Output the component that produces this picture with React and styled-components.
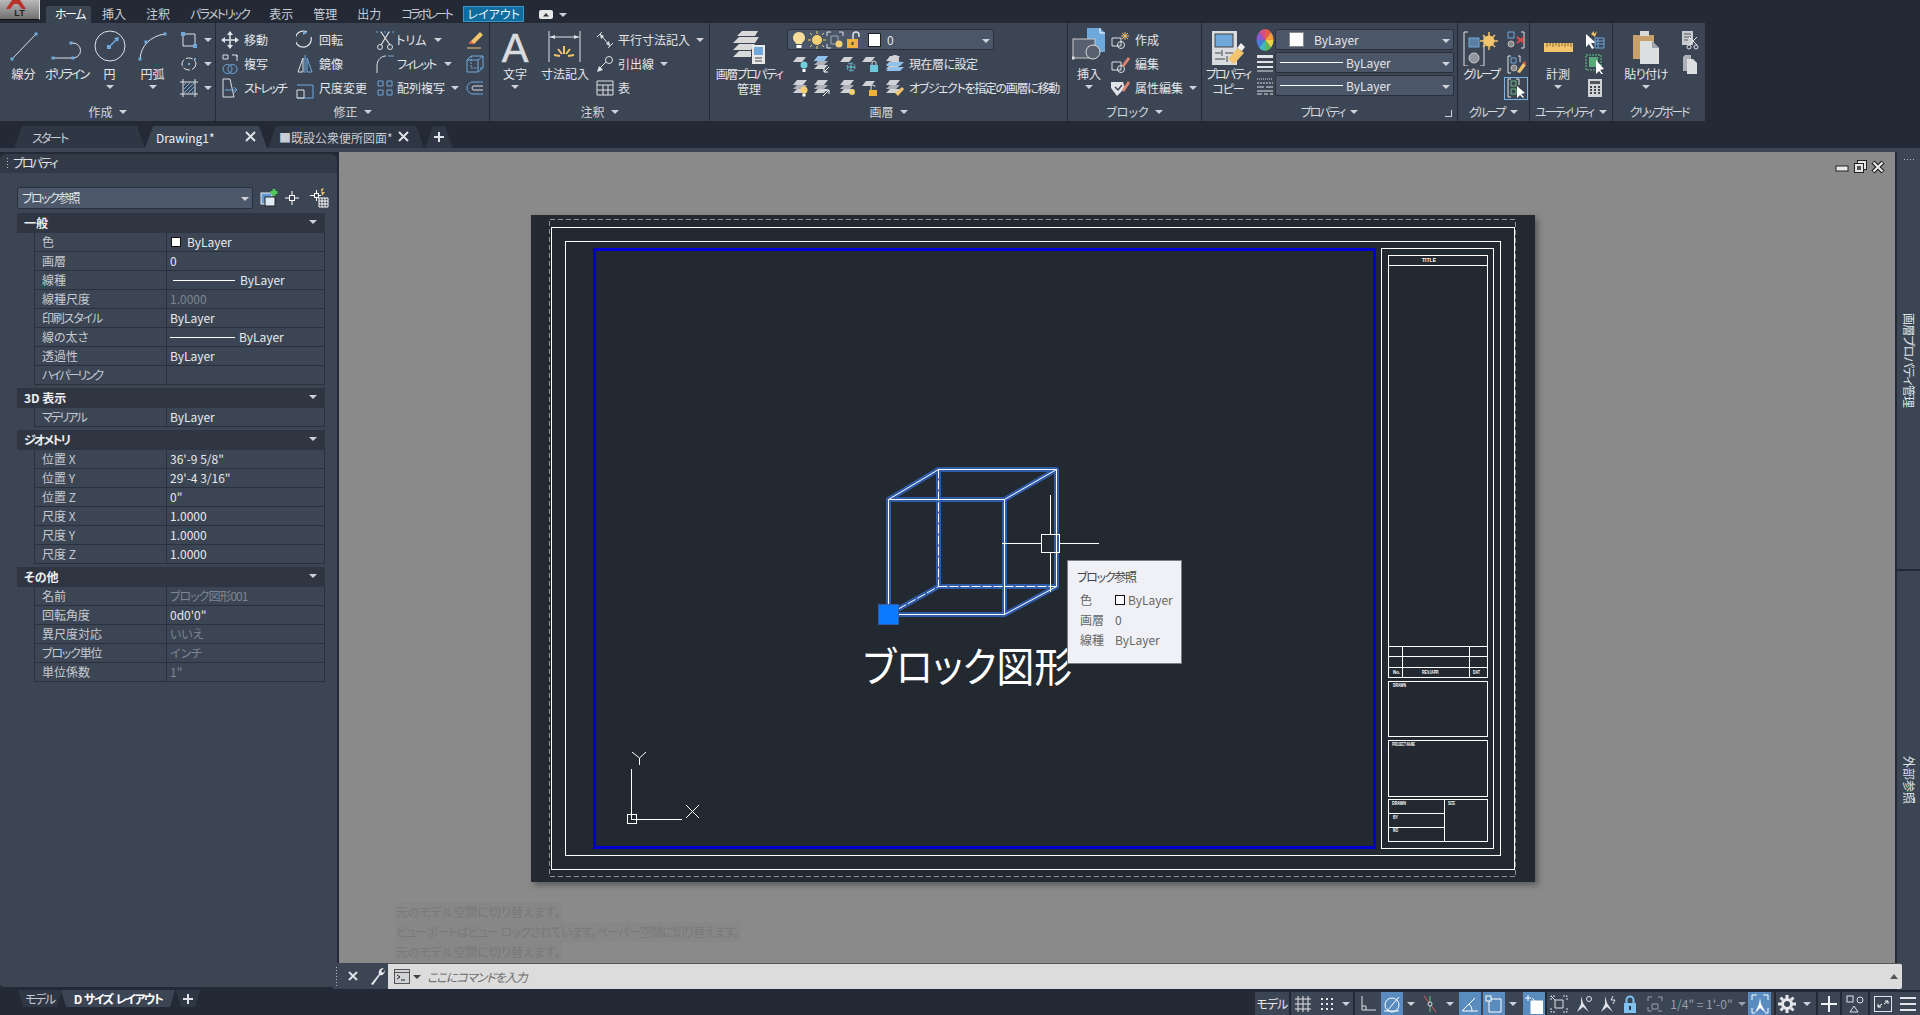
import React from 'react';
import styled, { createGlobalStyle, css } from 'styled-components';

const L = '#dfe2e6', B = '#6fa9dc', W = '#ffffff', Y = '#f2c46d', DK = '#2a303b';
const BG = '#232a35', PANEL = '#3c4554', HEAD = '#2f3642';

const Global = createGlobalStyle`
  html, body { margin: 0; padding: 0; width: 1920px; height: 1015px; overflow: hidden; background: ${BG}; }
  * { box-sizing: border-box; }
  body { font-family: "Noto Sans CJK JP", "Noto Sans", sans-serif; font-size: 12px; color: #e4e6ea; font-feature-settings: "palt"; }
`;

const Page = styled.div`width:1920px;height:1015px;display:flex;flex-direction:column;overflow:hidden;background:${BG};`;
const Narrow = styled.span`letter-spacing:${p => p.$ls ?? -1.8}px;`;
const TopBar = styled.div`height:23px;display:flex;align-items:flex-end;`;
const Logo = styled.div`
  position:relative;align-self:flex-start;width:40px;height:20px;margin-right:6px;
  background:linear-gradient(#b9b9b9,#707070);border-right:1px solid #d9d9d9;border-bottom:1px solid #111;
  color:#222;font:700 9px "Liberation Sans",sans-serif;text-align:center;padding-top:9px;line-height:9px;
  svg{position:absolute;left:5px;top:0;}
`;
const MenuTab = styled.div`
  height:17px;padding:0 10px;line-height:16px;color:#c9ced6;white-space:nowrap;margin-left:${p => p.$ml || 0}px;
  ${p => p.$active && css`background:${PANEL};color:#fff;border-radius:2px 2px 0 0;padding:0 9px;width:45px;`}
  ${p => p.$context && css`background:#0f6c9e;border:1px solid #3b97c9;margin:0 0 1px 2px;height:16px;line-height:14px;padding:0;width:61px;text-align:center;color:#e6f3fb;`}
`;
const TabIcon = styled.div`display:flex;align-items:center;gap:4px;height:17px;margin-left:14px;`;
const Caret = styled.i`
  display:inline-block;flex:none;width:0;height:0;border-left:4px solid transparent;border-right:4px solid transparent;
  border-top:4px solid ${p => p.$c || '#cfd3d9'};margin-left:${p => p.$ml || 0}px;
`;
const Ribbon = styled.div`height:98px;display:flex;`;
const RPanel = styled.section`width:${p => p.$w}px;margin-right:1px;background:${PANEL};display:flex;flex-direction:column;position:relative;`;
const RBody = styled.div`height:80px;display:flex;padding-left:${p => p.$pl || 0}px;`;
const RTitle = styled.div`height:17px;display:flex;align-items:center;justify-content:center;gap:6px;color:#d5d8dd;line-height:14px;white-space:nowrap;`;
const Launcher = styled.span`position:absolute;right:5px;bottom:4px;width:7px;height:7px;border-right:1px solid #cfd3d9;border-bottom:1px solid #cfd3d9;`;
const Big = styled.div`width:${p => p.$w}px;flex:none;display:flex;flex-direction:column;align-items:center;`;
const BigIcon = styled.div`height:43px;display:flex;align-items:flex-start;justify-content:center;padding-top:${p => p.$pt ?? 8}px;`;
const BigLabel = styled.div`line-height:15px;text-align:center;white-space:nowrap;color:#e4e6ea;`;
const BigCaret = styled.div`line-height:0;margin-top:3px;`;
const Col = styled.div`width:${p => p.$w}px;flex:none;padding-top:5px;margin-left:${p => p.$ml || 0}px;`;
const Tool = styled.div`height:24px;display:flex;align-items:center;white-space:nowrap;`;
const Cell = styled.span`width:${p => p.$w || 18}px;flex:none;display:flex;justify-content:center;align-items:center;margin-left:${p => p.$ml || 0}px;margin-right:${p => p.$mr || 0}px;`;
const ToolText = styled.span`color:#e4e6ea;line-height:14px;`;
const SelectedCell = styled(Cell)`height:23px;border:1px solid #78b4e6;`;
const LayerArea = styled.div`width:280px;margin-left:-1px;padding-top:6px;`;
const Combo = styled.div`
  height:${p => p.$h || 21}px;width:${p => p.$w ? `${p.$w}px` : 'auto'};display:flex;align-items:center;background:#4b5669;border:1px solid ${DK};
  border-radius:2px;position:relative;color:#e4e6ea;margin-bottom:${p => p.$mb || 0}px;
`;
const ComboArrow = styled.span`position:absolute;right:3px;top:50%;margin-top:-2px;line-height:0;`;
const ComboText = styled.span`margin-left:${p => p.$ml}px;`;
const Swatch = styled.span`width:${p => p.$s || 13}px;height:${p => p.$h || 14}px;background:#fff;flex:none;margin-left:${p => p.$ml || 0}px;border:1px solid ${p => p.$b || '#222'};`;
const LineStroke = styled.span`width:${p => p.$w}px;height:1px;background:#fff;flex:none;margin-left:${p => p.$ml || 0}px;margin-right:${p => p.$mr || 0}px;`;
const ComboStack = styled.div`width:179px;padding-top:6px;display:flex;flex-direction:column;gap:2px;`;
const ComboIcons = styled.div`width:21px;padding-top:6px;display:flex;flex-direction:column;gap:2px;flex:none;`;
const ComboIconCell = styled.div`height:21px;display:flex;align-items:center;justify-content:center;`;

const DocTabs = styled.div`height:22px;margin-top:5px;display:flex;padding-left:14px;`;
const DocTab = styled.div`
  width:${p => p.$w}px;margin-right:${p => p.$mr ?? 1}px;height:22px;padding-left:${p => p.$pl || 18}px;display:flex;align-items:center;position:relative;
  background:${p => p.$active ? PANEL : '#2f3744'};border-radius:8px 8px 0 0;color:${p => p.$active ? '#eef0f3' : '#c9ced6'};
  clip-path:polygon(8px 0,calc(100% - 8px) 0,100% 100%,0 100%);
`;
const DocClose = styled.span`position:absolute;right:${p => p.$r}px;top:5px;line-height:0;`;
const DocStrip = styled.div`height:4px;background:${PANEL};`;

const Main = styled.div`height:838px;display:flex;`;
const Palette = styled.aside`width:337px;margin-right:2px;display:flex;flex-direction:column;height:835px;padding-top:2px;flex:none;`;
const PaletteTitle = styled.div`height:19px;background:#333a47;border-radius:6px 6px 0 0;display:flex;align-items:center;gap:4px;padding:0 0 2px 6px;color:#e4e6ea;`;
const Grip = styled.span`width:3px;height:${p => p.$h || 11}px;flex:none;background-image:radial-gradient(circle,#b8bcc3 .7px,transparent .8px);background-size:3px 3px;`;
const PaletteBody = styled.div`flex:1;background:${PANEL};border-radius:0 0 4px 4px;padding:14px 0 0 17px;`;
const SelectorRow = styled.div`display:flex;height:22px;align-items:center;margin-bottom:4px;`;
const SelectorCombo = styled(Combo)`width:236px;height:22px;padding:0 0 2px 4px;background:#4d586b;`;
const SelectorTool = styled(Cell)`margin-left:${p => p.$ml}px;`;
const Section = styled.div`width:308px;margin-bottom:3px;`;
const SectionHead = styled.div`height:20px;background:${HEAD};display:flex;align-items:center;justify-content:space-between;padding:0 8px 2px 7px;font-weight:700;color:#eef0f3;`;
const Rows = styled.div`margin-left:17px;border-left:1px solid #2b313c;`;
const Row = styled.div`display:grid;grid-template-columns:132px 1fr;height:19px;border-bottom:1px solid #2b313c;border-right:1px solid #2b313c;line-height:18px;`;
const RowLabel = styled.div`padding-left:7px;color:#c5cad1;border-right:1px solid #2b313c;white-space:nowrap;`;
const RowValue = styled.div`padding-left:3px;display:flex;align-items:center;white-space:nowrap;color:${p => p.$dim ? '#7d8592' : '#e8eaed'};`;

const ViewCol = styled.div`flex:1;display:flex;flex-direction:column;min-width:0;width:1556px;`;
const Viewport = styled.div`height:811px;background:#8a8a8a;position:relative;overflow:hidden;padding:63px 0 0 192px;`;
const Sheet = styled.div`width:1004px;height:667px;background:#232930;box-shadow:3px 3px 6px rgba(0,0,0,.35);`;
const SheetSvg = styled.svg`display:block;`;
const WinButtons = styled.div`position:absolute;right:10px;top:8px;display:flex;gap:4px;`;
const Tip = styled.div`
  position:absolute;left:728px;top:408px;width:115px;height:104px;background:#f0f1f6;border:1px solid #7e7e7e;padding:7px 0 0 9px;color:#555;
`;
const TipTitle = styled.div`line-height:18px;margin-bottom:4px;color:#444;`;
const TipRow = styled.div`display:grid;grid-template-columns:35px 1fr;padding-left:3px;height:20px;line-height:20px;color:#666;`;
const TipValue = styled.div`display:flex;align-items:center;gap:3px;`;
const TipSwatch = styled.span`width:10px;height:10px;background:#fff;border:1px solid #111;`;
const History = styled.div`position:absolute;left:56px;bottom:1px;display:flex;flex-direction:column;align-items:flex-start;`;
const HistoryLine = styled.div`height:20px;line-height:19px;color:#797979;background:rgba(120,120,120,.18);padding:0 1px;white-space:nowrap;`;
const CommandBar = styled.div`
  height:26px;margin:0 -7px 1px -6px;display:flex;position:relative;z-index:2;width:1569px;flex:none;
`;
const CommandTools = styled.div`width:55px;background:${PANEL};display:flex;align-items:center;gap:0;padding-left:2px;flex:none;`;
const CommandInput = styled.div`flex:1;background:#dcdcdc;display:flex;align-items:center;padding-left:6px;gap:3px;border-top:1px solid #555;position:relative;border-radius:0 2px 2px 0;`;
const Placeholder = styled.span`font-style:italic;color:#6d6d6d;margin-left:3px;`;
const HistoryToggle = styled.span`position:absolute;right:4px;top:10px;width:0;height:0;border-left:4px solid transparent;border-right:4px solid transparent;border-bottom:5px solid #555;`;
const Dock = styled.div`width:23px;margin-left:2px;display:flex;flex-direction:column;gap:2px;flex:none;`;
const DockPane = styled.div`flex:${p => p.$f};background:${PANEL};display:flex;align-items:center;justify-content:center;position:relative;`;
const DockText = styled.span`writing-mode:vertical-rl;text-orientation:sideways;color:#dfe2e6;line-height:14px;`;
const DockGrip = styled(Grip)`position:absolute;top:6px;left:6px;width:11px;height:3px;`;

const Footer = styled.footer`height:25px;display:flex;justify-content:space-between;align-items:flex-start;`;
const LayoutTabs = styled.div`display:flex;padding-left:18px;height:17px;`;
const LayoutTab = styled.div`
  width:${p => p.$w}px;height:17px;display:flex;align-items:center;justify-content:center;margin-right:${p => p.$mr ?? 0}px;line-height:14px;word-spacing:2px;
  background:${p => p.$active ? PANEL : '#2f3744'};color:${p => p.$active ? '#fff' : '#c5cad1'};font-weight:${p => p.$active ? 700 : 400};
  clip-path:polygon(0 0,100% 0,calc(100% - 5px) 100%,5px 100%);
`;
const StatusBar = styled.div`display:flex;height:23px;margin-top:2px;gap:2px;padding-right:0;`;
const StatusGroup = styled.div`display:flex;background:${PANEL};height:23px;align-items:center;`;
const StatusCell = styled.div`
  width:${p => p.$w}px;height:23px;display:flex;align-items:center;justify-content:center;flex:none;margin-left:${p => p.$ml || 0}px;
  ${p => p.$on && css`background:#5b8cc0;`}
  color:${p => p.$dim ? '#99a0ab' : '#e4e6ea'};white-space:nowrap;
`;

const Svg = styled.svg`display:block;flex:none;`;
const BigLetter = styled.span`font:400 40px/32px "Liberation Sans",sans-serif;-webkit-text-stroke:.6px #d9dbde;color:#d9dbde;display:block;height:32px;`;

const Ic = ({ w = 18, h = 18, sw = 1, s = L, children }) => (
  <Svg width={w} height={h} viewBox={`0 0 ${w} ${h}`} fill="none" stroke={s} strokeWidth={sw}>{children}</Svg>
);
const Gr = ({ x, y, s = 3, c = B }) => <rect x={x - s / 2} y={y - s / 2} width={s} height={s} fill={c} stroke="none" />;

/* draw */
const ILine = () => <Ic w={30} h={30}><path d="M3 28 27 3" /><Gr x={27} y={3} /><Gr x={3} y={28} /></Ic>;
const IPoly = () => <Ic w={36} h={26}><path d="M4 22H24A7.5 7.5 0 0 0 24 7H22" /><Gr x={4} y={22} /><Gr x={24} y={22} /><Gr x={22} y={7} /></Ic>;
const ICircle = () => <Ic w={32} h={32}><circle cx="16" cy="16" r="15" /><path d="M16 16 23 9" stroke={B} strokeWidth="1.5" /><path d="M25 7l-5 1 4 4z" fill={B} stroke="none" /><Gr x={15} y={17} s={4} /></Ic>;
const IArc = () => <Ic w={30} h={30}><path d="M2 28C3 14 13 5 27 3" /><Gr x={27} y={3} /><Gr x={8} y={11} /><Gr x={2} y={28} /></Ic>;
const IRect = () => <Ic><path d="M3 3H15V15H3Z" /><Gr x={3} y={3} s={4} /><Gr x={15} y={15} s={4} /></Ic>;
const IEllipse = () => <Ic><ellipse cx="9" cy="9" rx="7" ry="6" strokeDasharray="7 2" /><Gr x={9} y={9} s={2} /><Gr x={15} y={4} s={2} /></Ic>;
const IHatch = () => <Ic><path d="M3 0V18M15 0V18M0 3H18M0 15H18" /><path d="M4 14 14 4M4 10 10 4M8 14 14 8M4 6 6 4M12 14 14 12" stroke={B} /></Ic>;
/* modify */
const IMove = () => <Ic><path d="M9 1V17M1 9H17" strokeWidth="1.5" s={W} /><path d="M9 0l3 4H6zM9 18l3-4H6zM0 9l4-3v6zM18 9l-4-3v6z" fill={L} stroke="none" /></Ic>;
const ICopy = () => <Ic w={18} h={22}><circle cx="6.500" cy="16" r="4.500" stroke={B} /><circle cx="11.500" cy="16" r="4.500" stroke={B} /><path d="M2 2H7V6H2Z" /><path d="M11 2H16V4M16 2V8" /></Ic>;
const IStretch = () => <Ic w={18} h={22}><path d="M2 20V2H9L13 20Z" /><path d="M4 13H16M13 10l3 3-3 3" stroke={B} /></Ic>;
const IRotate = () => <Ic w={18} h={22}><path d="M11 3A8 8 0 1 0 15 8" strokeWidth="1.2" /><path d="M7 1v5l4-2z" fill={B} stroke="none" /></Ic>;
const IMirror = () => <Ic w={18} h={22}><path d="M9 2V20" stroke={B} /><path d="M7 5V19H2Z" /><path d="M11 5V19H16Z" stroke={B} /></Ic>;
const IScale = () => <Ic w={18} h={22}><path d="M1 8H17V21H1" stroke={B} /><path d="M1 13H8V21H1Z" /></Ic>;
const ITrim = () => <Ic w={20} h={22}><path d="M1 3H19" stroke={B} strokeDasharray="2 2" /><path d="M6 3 15 16M14 3 6 16" strokeWidth="1.2" /><circle cx="5" cy="18" r="2.500" /><circle cx="15" cy="18" r="2.500" /></Ic>;
const IFillet = () => <Ic w={20} h={22}><path d="M2 20V13C2 7 6 3 11 3" /><path d="M13 3H19" stroke={B} /></Ic>;
const IArray = () => <Ic><path d="M2 2H7V7H2ZM11 2H16V7H11ZM2 11H7V16H2ZM11 11H16V16H11Z" stroke={B} /></Ic>;
const IErase = () => <Ic w={20} h={20}><path d="M2 18H16" stroke={Y} /><path d="M15 2 18 5 9 14H5L4 13Z" fill={Y} stroke="none" /><path d="M6 11 9 14H5L4 13Z" fill="#e25b4b" stroke="none" /></Ic>;
const IExplode = () => <Ic w={20} h={20}><path d="M2 6H13V18H2ZM2 6 6 2H18V14L13 18M18 2 13 6" stroke={B} /><path d="M6 2V14H18" stroke={B} strokeDasharray="2 1" /></Ic>;
const IOffset = () => <Ic w={20} h={18}><path d="M18 3H8A6 6 0 0 0 8 15H18" stroke={B} /><path d="M18 7H9A2 2 0 0 0 9 11H18" /></Ic>;
/* annotate */
const IDim = () => <Ic w={34} h={34}><path d="M1 1V32M32 1V32M2 7H31" /><path d="M2 7l5-2v4zM31 7l-5-2v4z" fill={L} stroke="none" /><path d="M16 16V24M10 19l4 5M22 19l-4 5M6 25l6 1M26 25l-6 1" stroke={Y} strokeWidth="2" /></Ic>;
const ILinear = () => <Ic><path d="M4 3 14 15" /><path d="M1 6 6 1M12 17 17 12" /><path d="M4 3l1 5 3-3zM14 15l-1-5-3 3z" fill={L} stroke="none" /></Ic>;
const ILeader = () => <Ic><circle cx="13" cy="5" r="3.500" /><path d="M10 7 3 14" /><path d="M1 17l2-6 4 4z" fill={L} stroke="none" /></Ic>;
const ITable = () => <Ic><path d="M1 2H17V16H1ZM1 6H17M1 11H17M7 6V16M12 6V16" /></Ic>;
/* layers */
const ILayerProps = () => (
  <Ic w={36} h={34}>
    <path d="M6 6 11 1H27L24 6Z" fill="#d9d9d9" stroke="none" /><path d="M2 13 8 7H28L24 13Z" fill="#d9d9d9" stroke="none" /><path d="M2 20 8 14H24L20 20Z" fill="#d9d9d9" stroke="none" /><path d="M2 27 8 21H20V27Z" fill="#d9d9d9" stroke="none" />
    <rect x="21" y="15" width="13" height="19" fill="#e8e8e8" stroke="none" /><rect x="23" y="17" width="9" height="8" fill={B} stroke="none" /><path d="M24 28H31M24 31H31" stroke="#444" />
  </Ic>
);
const IBulb = ({ c = '#f7dc9a' }) => <Ic w={14} h={18}><path d="M7 1C3 1 1 4 1 7C1 10 4 11 4 13H10C10 11 13 10 13 7C13 4 11 1 7 1Z" fill={c} stroke="none" /><rect x="4.500" y="14" width="5" height="3" fill="#fff" stroke="none" /></Ic>;
const ISun = () => <Ic><circle cx="9" cy="9" r="5" fill="#f4cf73" stroke="none" /><path d="M9 0V3M9 15V18M0 9H3M15 9H18M2 2 4 4M14 14 16 16M2 16 4 14M14 4 16 2" stroke="#f4cf73" /></Ic>;
const IFrame = () => <Ic><path d="M1 5V1H5M13 1H17V5M1 13V17H5" /><path d="M5 5H12V13H5Z" stroke="#9aa" /><circle cx="13" cy="13" r="3.500" fill="#f4cf73" stroke="none" /></Ic>;
const IOpenLock = ({ w = 16, c = '#f0b13c' }) => <Ic w={w} h={18}><path d="M7 8V4A3 3 0 0 1 13 4V6" stroke={L} strokeWidth="1.500" /><rect x="1" y="8" width="11" height="9" fill={c} stroke="none" /><rect x="5.500" y="11" width="2" height="3" fill="#444" stroke="none" /></Ic>;
const Lay = ({ children, n = 1, w = 20 }) => (
  <Ic w={w} h={20}>
    {n === 1 ? <path d="M2 8 6 3H15L11 8Z" fill="#d0d2d5" stroke="none" /> : <><path d="M2 7 6 2H16L12 7Z" fill="#d0d2d5" stroke="none" /><path d="M2 11 6 7H16L12 11Z" fill="#aeb2b8" stroke="none" /><path d="M2 15 6 11H16L12 15Z" fill="#d0d2d5" stroke="none" /></>}
    {children}
  </Ic>
);
const IL1 = () => <Lay><circle cx="13" cy="11" r="3.500" fill="#6fd0dc" stroke="none" /><rect x="11.500" y="15" width="3" height="3" fill="#fff" stroke="none" /></Lay>;
const IL2 = () => <Lay n={3}><path d="M2 7 6 2H16L12 7Z" fill="#8fc1ea" stroke="none" /><path d="M17 13 12 18M12 14v4h4" stroke="#fff" /></Lay>;
const IL3 = () => <Lay><circle cx="13" cy="13" r="4" stroke="#6fd0dc" strokeDasharray="2 1" /><path d="M13 9V17M9 13H17" stroke="#6fd0dc" /></Lay>;
const IL4 = () => <Lay w={22}><rect x="10" y="11" width="8" height="7" fill="#6ec8dd" stroke="none" /><path d="M12 11V9A2 2 0 0 1 16 9V11" /></Lay>;
const IL5 = () => <Lay n={3} w={22}><circle cx="11" cy="5" r="4" fill="#d0d2d5" stroke="none" /><path d="M2 12 6 8H20L16 12Z" fill="#8fc1ea" stroke="none" /><path d="M2 17 6 13H20L16 17Z" fill="#8fc1ea" stroke="none" /></Lay>;
const IL6 = () => <Lay n={3}><circle cx="13" cy="12" r="3.500" fill="#f4cf73" stroke="none" /><rect x="11.500" y="15.500" width="3" height="3" fill="#fff" stroke="none" /></Lay>;
const IL7 = () => <Lay n={3}><path d="M11 18 17 12M17 16v-4h-4" stroke="#fff" /></Lay>;
const IL8 = () => <Lay n={3}><circle cx="14" cy="14" r="3" fill="#f4cf73" stroke="none" /></Lay>;
const IL9 = () => <Lay w={22}><rect x="9" y="12" width="8" height="6" fill="#f0b13c" stroke="none" /><path d="M11 12V9A2 2 0 0 1 15 9" /></Lay>;
const IL10 = () => <Lay n={3} w={22}><path d="M11 15 18 9 20 11 14 18Z" fill={Y} stroke="none" /></Lay>;
/* block */
const IInsert = () => (
  <Ic w={34} h={34}>
    <path d="M15 0H28L33 5V24H15Z" fill={B} stroke="none" /><path d="M28 0V5H33" stroke="#fff" />
    <rect x="1" y="11" width="22" height="19" fill="#56606f" stroke="#ccc" /><circle cx="21" cy="24" r="7" stroke="#ddd" fill="#56606f" />
    <Gr x={1} y={30} s={3} c="#ddd" />
  </Ic>
);
const ICreate = () => <Ic w={20} h={20}><path d="M2 8H11V16H2M2 8V16" /><circle cx="11" cy="15" r="3.500" /><path d="M15 2V10M11 6H19M12 3 18 9M12 9 18 3" stroke={Y} /></Ic>;
const IEdit = () => <Ic w={20} h={20}><path d="M2 8H11V16H2M2 8V16" /><circle cx="11" cy="15" r="3.500" /><path d="M12 11 18 3 20 5 14 13Z" fill="#e0836f" stroke="none" /></Ic>;
const IAttr = () => <Ic w={20} h={20}><path d="M1 4H13L15 10 7 18 1 10Z" fill="#dfe2e6" stroke="none" /><path d="M5 9 8 12 12 7" stroke="#3c4554" strokeWidth="1.500" /><path d="M12 12 18 3 20 5 14 14Z" fill="#e0836f" stroke="none" /></Ic>;
/* properties */
const IMatch = () => (
  <Ic w={34} h={36}>
    <rect x="1" y="1" width="25" height="34" fill="#d9dbde" stroke="none" /><rect x="4" y="4" width="18" height="13" fill={B} stroke="#444" />
    <path d="M4 23H10M14 23H22M4 29H14M18 29H22M11 20V26M16 26V32" stroke="#444" />
    <path d="M17 29 27 18 33 23 23 34Z" fill={Y} stroke="none" /><path d="M26 18 30 13 34 17 31 21Z" fill="#eee" stroke="none" />
  </Ic>
);
const wheel = ['#e95a47', '#f39a3e', '#f2d24a', '#5cb85c', '#3fb7c4', '#4b7bd6', '#8b5bd0', '#d0508e'];
const IWheel = () => (
  <Ic w={18} h={24}>
    {wheel.map((c, i) => {
      const a0 = (i * 45 - 90) * Math.PI / 180, a1 = ((i + 1) * 45 - 90) * Math.PI / 180;
      return <path key={c} d={`M9 12L${9 + 8.500 * Math.cos(a0)} ${12 + 11 * Math.sin(a0)}A8.500 11 0 0 1 ${9 + 8.500 * Math.cos(a1)} ${12 + 11 * Math.sin(a1)}Z`} fill={c} stroke="none" />;
    })}
  </Ic>
);
const ILwt = () => <Ic w={16} h={18}><path d="M0 2.500H16" strokeWidth="3" /><path d="M0 8H16" strokeWidth="2" /><path d="M0 13H16" strokeWidth="2" /><path d="M0 17H16" /></Ic>;
const ILtype = () => <Ic w={16} h={18}><path d="M0 2H16" strokeDasharray="1 1" /><path d="M0 6H16" strokeDasharray="2 1" /><path d="M0 10H7M9 10H16" /><path d="M0 14H16" /><path d="M0 17H5M7 17H11M13 17H16" /></Ic>;
/* group */
const IGroup = () => (
  <Ic w={36} h={36}>
    <path d="M5 2H1V36H5M21 7V36H17" />
    <rect x="6" y="8" width="10" height="9" fill="#5d7ea3" stroke={B} /><circle cx="11" cy="28" r="5" fill="#8f96a0" stroke="#ccc" />
    <path d="M26 2V20M17 11H35M20 5 32 17M20 17 32 5" stroke={Y} strokeWidth="1.500" /><circle cx="26" cy="11" r="5.500" fill={Y} stroke="none" />
  </Ic>
);
const IUngroup = () => <Ic w={20} h={18}><path d="M2 1H8V7H2Z" stroke={B} /><circle cx="5" cy="13" r="3" stroke="#bbb" fill="#888" /><path d="M15 1H18V17H15" /><path d="M11 6 18 12M18 6 11 12" stroke="#e24b4b" strokeWidth="2" /></Ic>;
const IGroupEdit = () => <Ic w={20} h={20}><path d="M5 2H2V19H5M12 2H14V8" /><path d="M5 4H10V9H5Z" stroke={B} /><circle cx="8" cy="14" r="3" stroke="#bbb" fill="#888" /><path d="M11 18 17 9 20 11 14 19Z" fill={Y} stroke="none" /><path d="M17 9 18 7 20 9 19 11Z" fill="#e05b4b" stroke="none" /></Ic>;
const IGroupSel = () => <Ic w={20} h={20}><path d="M5 1H2V19H5M10 1H13V7" /><path d="M5 3H10V8H5Z" stroke="#66bb77" /><path d="M5 11H10V16H5Z" stroke="#66bb77" /><path d="M11 8V20L14 17 17 20 18 19 15 16 19 15Z" fill="#fff" stroke="none" /></Ic>;
/* utilities */
const IRuler = () => <Ic w={29} h={9} s="#8a6a30"><rect width="29" height="9" fill={Y} stroke="none" /><path d="M3 0V4M6 0V3M9 0V4M12 0V3M15 0V4M18 0V3M21 0V4M24 0V3M27 0V4" /></Ic>;
const IQuick = () => <Ic w={20} h={20}><path d="M1 4V17L4 14 7 19 9 18 6 13H11Z" fill="#fff" stroke="none" /><path d="M6 4 9 1V4L12 1 10 7Z" fill={Y} stroke="none" /><path d="M10 8H19V18H10ZM13 8V18M10 11H19M10 14H19" stroke={B} /></Ic>;
const ISelAll = () => <Ic w={20} h={20}><rect x="1" y="1" width="15" height="15" stroke="#67c487" strokeDasharray="2 1" /><rect x="4" y="3" width="9" height="10" fill="#5aa97a" stroke="none" /><path d="M11 6V20L14 17 17 21 18 20 15 16 19 15Z" fill="#fff" stroke="none" /></Ic>;
const ICalc = () => <Ic w={14} h={18}><rect width="14" height="18" fill="#cfd2d6" stroke="none" /><rect x="2" y="2" width="10" height="3" fill="#555" stroke="none" /><path d="M2 8H4M6 8H8M10 8H12M2 11H4M6 11H8M10 11H12M2 14H4M6 14H8M10 14H12" stroke="#444" strokeWidth="2" /></Ic>;
const IPaste = () => (
  <Ic w={28} h={34}>
    <path d="M1 4H22V28H1Z" fill="#c9a06a" stroke="none" /><rect x="8" y="0" width="9" height="5" fill="#d9d9d9" stroke="none" />
    <path d="M8 10H20L27 17V33H8Z" fill="#dedfe1" stroke="none" /><path d="M20 10V17H27Z" fill="#9ea3aa" stroke="none" />
  </Ic>
);
const ICut = () => <Ic w={18} h={20}><rect x="1" y="1" width="11" height="14" fill="#c9ccd0" stroke="none" /><path d="M3 4H10M3 7H10M3 10H7" stroke="#555" /><path d="M8 7 16 15M16 7 8 15" /><circle cx="8" cy="17" r="2" /><circle cx="15" cy="17" r="2" /></Ic>;
const ICopyClip = () => <Ic w={16} h={20}><path d="M3 1H9V17H1V3Z" fill="#aeb2b8" stroke="none" /><path d="M5 5H11L15 9V20H5Z" fill="#dedfe1" stroke="none" /></Ic>;
/* palette tools */
const IPickAdd = () => <Ic w={20} h={20}><rect x="1" y="5" width="11" height="11" fill="#5f9ad3" stroke="#eee" /><rect x="5" y="9" width="10" height="9" fill="#dfeaf5" stroke="#222" /><path d="M14 1V8M10.500 4.500H17.500" stroke="#4fc65a" strokeWidth="3" /></Ic>;
const IPick = () => <Ic w={16} h={16} s={W}><rect x="5.500" y="5.500" width="5" height="5" /><path d="M8 1V5M8 11V15M1 8H5M11 8H15" /></Ic>;
const IQSel = () => <Ic w={20} h={20} s={W}><rect x="5.500" y="5.500" width="4" height="4" /><path d="M7.500 2V5M1 7.500H5M10 7.500H12M7.500 10V13" /><path d="M12 1 15 0 13 4H16L13 8Z" fill={Y} stroke="none" /><path d="M10 10H19V19H10ZM13 10V19M16 10V19M10 13H19M10 16H19" /></Ic>;
const IX = ({ c = '#dfe2e6', w = 11 }) => <Ic w={w} h={w} sw={2} s={c}><path d={`M1 1 ${w - 1} ${w - 1}M${w - 1} 1 1 ${w - 1}`} /></Ic>;
const ICamera = () => <Ic w={16} h={10}><rect width="14" height="9" x="1" rx="2" fill="#e8e8e8" stroke="none" /><path d="M5 6.500 8 3 11 6.500Z" fill="#333" stroke="none" /></Ic>;
const IRedA = () => <Ic w={22} h={9}><path d="M1 9 7 0H15L21 9H17L13 4H9L5 9Z" fill="#b9322a" stroke="none" /></Ic>;
const IWrench = () => <Ic w={16} h={18}><path d="M2 17 10 7C9 4 11 1 15 1L12 4 14 6 16 3C16 7 13 9 11 8L4 18Z" fill="#e8eaed" stroke="none" /></Ic>;
const IPrompt = () => <Ic w={16} h={15} s="#555"><rect x=".5" y=".5" width="15" height="14" fill="#cfd1d4" /><path d="M.5 3.500H15.500" /><path d="M3 6 6 8 3 10M7 11H11" stroke="#222" /></Ic>;
/* status */
const SGrid = () => <Ic w={18} h={18} s="#e4e6ea"><path d="M4 1V17M9 1V17M14 1V17M1 4H17M1 9H17M1 14H17" /></Ic>;
const SDots = () => <Ic w={14} h={14} s="none">{[2, 7, 12].flatMap(y => [2, 7, 12].map(x => <rect key={`${x}${y}`} x={x - 1} y={y - 1} width="2" height="2" fill="#e4e6ea" />))}</Ic>;
const SOrtho = () => <Ic w={18} h={18}><path d="M3 1V15H17" /><path d="M3 11H7V15" /></Ic>;
const SPolar = () => <Ic w={18} h={18} s="#fff"><circle cx="9" cy="10" r="7" /><path d="M1 16H16M4 16 16 2" /></Ic>;
const SIso = () => <Ic w={18} h={18}><path d="M3 1 15 17" stroke="#e05b5b" /><path d="M9 1V17" stroke="#67c487" /><circle cx="9" cy="9" r="2" fill="#3c4554" /></Ic>;
const SAngle = () => <Ic w={18} h={18} s="#fff"><path d="M1 16H17M1 16 14 3M11 16C11 13 10 11 8 9" /></Ic>;
const SSnap = () => <Ic w={18} h={18} s="#fff"><path d="M4 4H16V17H4Z" /><rect x="1" y="1" width="5" height="5" fill="#5b8cc0" /></Ic>;
const SClip = () => <Ic w={18} h={20} s="#fff"><rect x="6" y="7" width="12" height="13" fill="#fff" /><path d="M3 1V7M0 4H6M7 4 11 8" /></Ic>;
const SFrame = () => <Ic w={18} h={18}><path d="M1 5V1H5M13 1H17V5M1 13V17H5M13 17H17V13" strokeDasharray="2 1" /><path d="M5 5H13V13H5Z" /><path d="M1 1 5 5" /></Ic>;
const SFig = ({ extra }) => <Ic w={18} h={18}><path d="M7 1 9 8 15 17 9 12 3 17 7 9Z" fill="#dfe2e6" stroke="none" />{extra}</Ic>;
const SLock = () => <Ic w={14} h={18} s="#7fc0ee"><path d="M3.500 9V5A3.500 3.500 0 0 1 10.500 5V9" strokeWidth="2" /><rect x="1" y="8" width="12" height="10" fill="#7fc0ee" stroke="none" /><rect x="6" y="11" width="2" height="4" fill="#335" stroke="none" /></Ic>;
const SDim = () => <Ic w={16} h={16} s="#9aa0a9"><path d="M1 5V1H5M11 1H15V5M1 11V15H5M11 15H15" /><path d="M5 8H11V13H5Z" /></Ic>;
const SAnno = () => <Ic w={18} h={20} s="#fff"><path d="M1 6V1H6M12 1H17V6M1 14V19H4M14 19H17V14" /><path d="M9 4 10 10 15 19 9 14 4 19 8 10Z" fill="#fff" stroke="none" /></Ic>;
const SGear = () => <Ic w={18} h={18} s="#e4e6ea"><circle cx="9" cy="9" r="4.500" strokeWidth="3" /><path d="M9 0V4M9 14V18M0 9H4M14 9H18M2.500 2.500 5 5M13 13 15.500 15.500M2.500 15.500 5 13M13 5 15.500 2.500" strokeWidth="3" /></Ic>;
const SPlus = () => <Ic w={18} h={18} s="#f0f1f3" sw={2}><path d="M9 1V17M1 9H17" /></Ic>;
const SIsolate = () => <Ic w={18} h={18}><rect x="1" y="1" width="6" height="6" /><circle cx="14" cy="5" r="3" /><path d="M8 11 12 17H4Z" /></Ic>;
const SFull = () => <Ic w={18} h={16}><rect x=".5" y=".5" width="17" height="15" /><path d="M11 5H14V8M4 8V11H7M14 5 10 8M4 11 8 8" stroke="#fff" /></Ic>;
const SMenu = () => <Ic w={18} h={16} sw={2} s="#e4e6ea"><path d="M1 2H17M1 8H17M1 14H17" /></Ic>;
const WinMin = () => <Ic w={14} h={14} s="#222"><rect x="1" y="6" width="12" height="5" fill="#e8e8e8" /></Ic>;
const WinRestore = () => <Ic w={14} h={14} s="#222"><rect x="4.500" y=".5" width="9" height="9" fill="#e8e8e8" /><rect x="1.500" y="3.500" width="9" height="9" fill="#e8e8e8" /><rect x="4" y="6" width="4" height="4" fill="#555" stroke="none" /></Ic>;
const WinClose = () => <Ic w={14} h={14} s="#222"><path d="M2 2 12 12M12 2 2 12" strokeWidth="4.500" /><path d="M2.500 2.500 11.500 11.500M11.500 2.500 2.500 11.500" stroke="#eee" strokeWidth="2" /></Ic>;

const BigTool = ({ w, icon, lines, caret, pt }) => (
  <Big $w={w}>
    <BigIcon $pt={pt}>{icon}</BigIcon>
    {lines.map((l, i) => <BigLabel key={i}>{l}</BigLabel>)}
    {caret && <BigCaret><Caret /></BigCaret>}
  </Big>
);

const Box = ({ x, y, w, h }) => <rect x={x + .5} y={y + .5} width={w} height={h} />;
const HL = ({ x1, x2, y }) => <path d={`M${x1} ${y + .5}H${x2}`} />;
const VL = ({ x, y1, y2 }) => <path d={`M${x + .5} ${y1}V${y2}`} />;
const Tiny = ({ x, y, len, children }) => <text x={x} y={y} fontSize="5" fontWeight="700" fill="#fff" stroke="none" fontFamily="Liberation Sans, sans-serif" textLength={len} lengthAdjust="spacingAndGlyphs">{children}</text>;

const Drawing = () => {
  const solid = 'M888.5 499.5H1004.500V614.500H888.500ZM888.500 499.500 938.500 469.500H1056.500V586.500L1004.500 614.500M1004.500 499.500 1056.500 469.500';
  const hidden = 'M938.500 469.500V586.500M938.500 586.500H1056.500M888.500 614.500 938.500 586.500';
  return (
    <SheetSvg width="1004" height="667" viewBox="531 215 1004 667" fill="none" shapeRendering="crispEdges">
      <rect x="549.5" y="219.5" width="966" height="657" stroke="#8b9097" strokeDasharray="5 3" />
      <g stroke="#fff">
        <Box x={551} y={227} w={963} h={642} />
        <Box x={565} y={241} w={935} h={614} />
      </g>
      <rect x="594" y="249" width="780" height="598" stroke="#0000d6" strokeWidth="3" />
      <g stroke="#fff">
        <Box x={1381} y={248} w={112} h={600} />
        <Box x={1388} y={255} w={99} h={422} />
        <HL x1={1388} x2={1487} y={265} />
        <HL x1={1388} x2={1487} y={646} />
        <HL x1={1388} x2={1487} y={656} />
        <HL x1={1388} x2={1487} y={667} />
        <VL x={1402} y1={646} y2={677} />
        <VL x={1469} y1={646} y2={677} />
        <Box x={1388} y={681} w={99} h={55} />
        <Box x={1388} y={740} w={99} h={56} />
        <Box x={1388} y={799} w={99} h={42} />
        <HL x1={1388} x2={1444} y={813} />
        <HL x1={1388} x2={1444} y={827} />
        <VL x={1444} y1={799} y2={841} />
        <Tiny x={1422} y={262} len={14}>TITLE</Tiny>
        <Tiny x={1393} y={674} len={7}>No.</Tiny>
        <Tiny x={1422} y={674} len={17}>REV./APP.</Tiny>
        <Tiny x={1473} y={674} len={7}>DAT</Tiny>
        <Tiny x={1393} y={687} len={13}>DRAWN</Tiny>
        <Tiny x={1392} y={746} len={23}>PROJECT NAME</Tiny>
        <Tiny x={1392} y={805} len={14}>DRAWN</Tiny>
        <Tiny x={1448} y={805} len={7}>SIZE</Tiny>
        <Tiny x={1393} y={819} len={5}>BY</Tiny>
        <Tiny x={1393} y={832} len={5}>NO</Tiny>
      </g>
      <g shapeRendering="geometricPrecision">
        <g stroke="#2f5ba8" strokeWidth="5" strokeLinejoin="round"><path d={solid} /><path d={hidden} /></g>
        <g stroke="#fff" strokeWidth="1"><path d={solid} /><path d={hidden} strokeDasharray="9 2" /></g>
      </g>
      <rect x="878" y="604" width="20" height="20" fill="#0a7bff" stroke="#2f5ba8" />
      <text x="863" y="682" fontSize="41" fill="#fff" fontFamily="Noto Sans CJK JP, sans-serif" textLength="209" lengthAdjust="spacingAndGlyphs" stroke="none" shapeRendering="geometricPrecision">ブロック図形</text>
      <g stroke="#fff">
        <path d="M1002 543.5H1041M1060 543.5H1099M1050.500 495V534M1050.500 553V592" />
        <rect x="1041.500" y="534.500" width="18" height="18" />
        <path d="M631.500 769V819H682" />
        <rect x="627.500" y="814.500" width="9" height="9" />
        <path d="M632 752l7.500 6 6.500-6M639.500 758v7M686 805l13 13M699 805l-13 13" shapeRendering="geometricPrecision" />
      </g>
    </SheetSvg>
  );
};

const N = (t, n) => <Narrow $ls={n}>{t}</Narrow>;

const propSections = [
  ['一般', [
    ['色', <><Swatch $s={10} $h={10} $ml={1} $b="#111" /><ComboText $ml={6}>ByLayer</ComboText></>],
    ['画層', '0'],
    ['線種', <><LineStroke $w={62} $ml={3} $mr={5} />ByLayer</>],
    ['線種尺度', '1.0000', true],
    [N('印刷スタイル', -1.2), 'ByLayer'],
    ['線の太さ', <><LineStroke $w={65} $mr={4} />ByLayer</>],
    ['透過性', 'ByLayer'],
    [N('ハイパーリンク', -2.3), ''],
  ]],
  ['3D 表示', [[N('マテリアル', -2), 'ByLayer']]],
  [N('ジオメトリ', -1.8), [
    ['位置 X', `36'-9 5/8"`], ['位置 Y', `29'-4 3/16"`], ['位置 Z', '0"'],
    ['尺度 X', '1.0000'], ['尺度 Y', '1.0000'], ['尺度 Z', '1.0000'],
  ]],
  ['その他', [
    ['名前', N('ブロック図形001', -1), true], ['回転角度', `0d0'0"`], ['異尺度対応', 'いいえ', true],
    [N('ブロック単位', -1.2), 'インチ', true], ['単位係数', '1"', true],
  ]],
];

export default function App() {
  return (
    <Page>
      <Global />
      <TopBar>
        <Logo><IRedA />LT</Logo>
        <MenuTab $active>{N('ホーム', -1.5)}</MenuTab>
        <MenuTab $ml={1}>挿入</MenuTab>
        <MenuTab>注釈</MenuTab>
        <MenuTab>{N('パラメトリック', -1.7)}</MenuTab>
        <MenuTab>表示</MenuTab>
        <MenuTab>管理</MenuTab>
        <MenuTab>出力</MenuTab>
        <MenuTab>{N('コラボレート', -2.5)}</MenuTab>
        <MenuTab $context>レイアウト</MenuTab>
        <TabIcon><ICamera /><Caret $ml={1} /></TabIcon>
      </TopBar>

      <Ribbon>
        <RPanel $w={215}>
          <RBody $pl={2}>
            <BigTool w={43} pt={8} icon={<ILine />} lines={['線分']} />
            <BigTool w={43} pt={13} icon={<IPoly />} lines={[N('ポリライン', -2)]} />
            <BigTool w={43} pt={7} icon={<ICircle />} lines={['円']} caret />
            <BigTool w={43} pt={8} icon={<IArc />} lines={['円弧']} caret />
            <Col $w={41}>
              <Tool><Cell $w={30}><IRect /></Cell><Caret /></Tool>
              <Tool><Cell $w={30}><IEllipse /></Cell><Caret /></Tool>
              <Tool><Cell $w={30}><IHatch /></Cell><Caret /></Tool>
            </Col>
          </RBody>
          <RTitle>作成<Caret /></RTitle>
        </RPanel>

        <RPanel $w={273}>
          <RBody $pl={5}>
            <Col $w={75}>
              <Tool><Cell $mr={5}><IMove /></Cell><ToolText>移動</ToolText></Tool>
              <Tool><Cell $mr={5}><ICopy /></Cell><ToolText>複写</ToolText></Tool>
              <Tool><Cell $mr={5}><IStretch /></Cell><ToolText>{N('ストレッチ', -1.8)}</ToolText></Tool>
            </Col>
            <Col $w={79}>
              <Tool><Cell $mr={5}><IRotate /></Cell><ToolText>回転</ToolText></Tool>
              <Tool><Cell $mr={5}><IMirror /></Cell><ToolText>鏡像</ToolText></Tool>
              <Tool><Cell $mr={5}><IScale /></Cell><ToolText>尺度変更</ToolText></Tool>
            </Col>
            <Col $w={90}>
              <Tool><Cell $w={20} $mr={1}><ITrim /></Cell><ToolText>トリム</ToolText><Caret $ml={8} /></Tool>
              <Tool><Cell $w={20} $mr={2}><IFillet /></Cell><ToolText>{N('フィレット', -2)}</ToolText><Caret $ml={9} /></Tool>
              <Tool><Cell $w={20} $mr={2}><IArray /></Cell><ToolText>配列複写</ToolText><Caret $ml={6} /></Tool>
            </Col>
            <Col $w={20}>
              <Tool><Cell $w={20}><IErase /></Cell></Tool>
              <Tool><Cell $w={20}><IExplode /></Cell></Tool>
              <Tool><Cell $w={20}><IOffset /></Cell></Tool>
            </Col>
          </RBody>
          <RTitle>修正<Caret /></RTitle>
        </RPanel>

        <RPanel $w={219}>
          <RBody>
            <BigTool w={50} pt={9} icon={<BigLetter>A</BigLetter>} lines={['文字']} caret />
            <BigTool w={50} pt={7} icon={<IDim />} lines={['寸法記入']} />
            <Col $w={110} $ml={6}>
              <Tool><Cell $mr={4}><ILinear /></Cell><ToolText>平行寸法記入</ToolText><Caret $ml={6} /></Tool>
              <Tool><Cell $mr={4}><ILeader /></Cell><ToolText>引出線</ToolText><Caret $ml={6} /></Tool>
              <Tool><Cell $mr={4}><ITable /></Cell><ToolText>表</ToolText></Tool>
            </Col>
          </RBody>
          <RTitle>注釈<Caret /></RTitle>
        </RPanel>

        <RPanel $w={357}>
          <RBody $pl={0}>
            <BigTool w={78} pt={7} icon={<ILayerProps />} lines={[N('画層プロパティ', -1.6), '管理']} />
            <LayerArea>
              <Combo $w={207} $mb={2}>
                <Cell $w={16} $ml={3}><IBulb /></Cell>
                <Cell $w={18} $ml={1}><ISun /></Cell>
                <Cell $w={18}><IFrame /></Cell>
                <Cell $w={18} $ml={1}><IOpenLock /></Cell>
                <Swatch $ml={5} />
                <ComboText $ml={6}>0</ComboText>
                <ComboArrow><Caret /></ComboArrow>
              </Combo>
              <Tool>
                <Cell $w={20} $ml={4}><IL1 /></Cell><Cell $w={20} $ml={1}><IL2 /></Cell>
                <Cell $w={20} $ml={6}><IL3 /></Cell><Cell $w={20} $ml={3}><IL4 /></Cell>
                <Cell $w={20} $ml={4} $mr={4}><IL5 /></Cell><ToolText>{N('現在層に設定', -.5)}</ToolText>
              </Tool>
              <Tool>
                <Cell $w={20} $ml={4}><IL6 /></Cell><Cell $w={20} $ml={1}><IL7 /></Cell>
                <Cell $w={20} $ml={6}><IL8 /></Cell><Cell $w={20} $ml={3}><IL9 /></Cell>
                <Cell $w={20} $ml={4} $mr={4}><IL10 /></Cell><ToolText>{N('オブジェクトを指定の画層に移動', -1.3)}</ToolText>
              </Tool>
            </LayerArea>
          </RBody>
          <RTitle>画層<Caret /></RTitle>
        </RPanel>

        <RPanel $w={133}>
          <RBody>
            <BigTool w={42} pt={5} icon={<IInsert />} lines={['挿入']} caret />
            <Col $w={90}>
              <Tool><Cell $w={20} $mr={5}><ICreate /></Cell><ToolText>作成</ToolText></Tool>
              <Tool><Cell $w={20} $mr={5}><IEdit /></Cell><ToolText>編集</ToolText></Tool>
              <Tool><Cell $w={20} $mr={5}><IAttr /></Cell><ToolText>属性編集</ToolText><Caret $ml={6} /></Tool>
            </Col>
          </RBody>
          <RTitle>ブロック<Caret /></RTitle>
        </RPanel>

        <RPanel $w={255}>
          <RBody>
            <BigTool w={52} pt={7} icon={<IMatch />} lines={[N('プロパティ', -1.8), N('コピー', -1)]} />
            <ComboIcons>
              <ComboIconCell><IWheel /></ComboIconCell>
              <ComboIconCell><ILwt /></ComboIconCell>
              <ComboIconCell><ILtype /></ComboIconCell>
            </ComboIcons>
            <ComboStack>
              <Combo $h={21}><Swatch $ml={13} $s={15} $h={15} $b="#888" /><ComboText $ml={10}>ByLayer</ComboText><ComboArrow><Caret /></ComboArrow></Combo>
              <Combo $h={21}><LineStroke $w={63} $ml={4} $mr={3} />ByLayer<ComboArrow><Caret /></ComboArrow></Combo>
              <Combo $h={21}><LineStroke $w={63} $ml={4} $mr={3} />ByLayer<ComboArrow><Caret /></ComboArrow></Combo>
            </ComboStack>
          </RBody>
          <RTitle>{N('プロパティ', -2)}<Caret /></RTitle>
          <Launcher />
        </RPanel>

        <RPanel $w={71}>
          <RBody>
            <BigTool w={46} pt={7} icon={<IGroup />} lines={[N('グループ', -2.2)]} />
            <Col $w={24}>
              <Tool><Cell $w={24}><IUngroup /></Cell></Tool>
              <Tool><Cell $w={24}><IGroupEdit /></Cell></Tool>
              <Tool><SelectedCell $w={24}><IGroupSel /></SelectedCell></Tool>
            </Col>
          </RBody>
          <RTitle>{N('グループ', -2.2)}<Caret /></RTitle>
        </RPanel>

        <RPanel $w={82}>
          <RBody>
            <BigTool w={56} pt={20} icon={<IRuler />} lines={['計測']} caret />
            <Col $w={18}>
              <Tool><Cell><IQuick /></Cell></Tool>
              <Tool><Cell><ISelAll /></Cell></Tool>
              <Tool><Cell><ICalc /></Cell></Tool>
            </Col>
          </RBody>
          <RTitle>{N('ユーティリティ', -2)}<Caret /></RTitle>
        </RPanel>

        <RPanel $w={92}>
          <RBody>
            <BigTool w={66} pt={8} icon={<IPaste />} lines={[N('貼り付け', -.5)]} caret />
            <Col $w={22}>
              <Tool><Cell $w={22}><ICut /></Cell></Tool>
              <Tool><Cell $w={22}><ICopyClip /></Cell></Tool>
            </Col>
          </RBody>
          <RTitle>{N('クリップボード', -2.2)}</RTitle>
        </RPanel>
      </Ribbon>

      <DocTabs>
        <DocTab $w={131} $mr={0}>{N('スタート', -1.7)}</DocTab>
        <DocTab $w={122} $pl={11} $active $mr={1}>Drawing1*<DocClose $r={11}><IX /></DocClose></DocTab>
        <DocTab $w={156} $pl={11} $mr={1}>■既設公衆便所図面*<DocClose $r={15}><IX /></DocClose></DocTab>
        <DocTab $w={28} $pl={9}><Ic w={10} h={10} sw={2}><path d="M5 0V10M0 5H10" /></Ic></DocTab>
      </DocTabs>
      <DocStrip />

      <Main>
        <Palette>
          <PaletteTitle><Grip />{N('プロパティ', -2)}</PaletteTitle>
          <PaletteBody>
            <SelectorRow>
              <SelectorCombo>{N('ブロック参照', -1.6)}<ComboArrow><Caret /></ComboArrow></SelectorCombo>
              <SelectorTool $ml={7} $w={20}><IPickAdd /></SelectorTool>
              <SelectorTool $ml={4} $w={16}><IPick /></SelectorTool>
              <SelectorTool $ml={9} $w={20}><IQSel /></SelectorTool>
            </SelectorRow>
            {propSections.map(([title, rows], si) => (
              <Section key={si}>
                <SectionHead>{title}<Caret /></SectionHead>
                <Rows>
                  {rows.map(([k, v, dim], ri) => (
                    <Row key={ri}><RowLabel>{k}</RowLabel><RowValue $dim={dim}>{v}</RowValue></Row>
                  ))}
                </Rows>
              </Section>
            ))}
          </PaletteBody>
        </Palette>

        <ViewCol>
          <Viewport>
            <Sheet><Drawing /></Sheet>
            <WinButtons><WinMin /><WinRestore /><WinClose /></WinButtons>
            <Tip>
              <TipTitle>{N('ブロック参照', -1.3)}</TipTitle>
              <TipRow>色<TipValue><TipSwatch />ByLayer</TipValue></TipRow>
              <TipRow>画層<TipValue>0</TipValue></TipRow>
              <TipRow>線種<TipValue>ByLayer</TipValue></TipRow>
            </Tip>
            <History>
              <HistoryLine>元のモデル空間に切り替えます。</HistoryLine>
              <HistoryLine>{N('ビューポートはビュー ロックされています。ペーパー空間に切り替えます。', -.8)}</HistoryLine>
              <HistoryLine>元のモデル空間に切り替えます。</HistoryLine>
            </History>
          </Viewport>
          <CommandBar>
            <CommandTools>
              <Grip $h={20} />
              <Cell $w={20} $ml={5}><IX w={10} /></Cell>
              <Cell $w={20} $ml={4}><IWrench /></Cell>
            </CommandTools>
            <CommandInput>
              <IPrompt /><Caret $c="#444" />
              <Placeholder>{N('ここにコマンドを入力', -1)}</Placeholder>
              <HistoryToggle />
            </CommandInput>
          </CommandBar>
        </ViewCol>

        <Dock>
          <DockPane $f="417"><DockGrip /><DockText>{N('画層プロパティ管理', -.8)}</DockText></DockPane>
          <DockPane $f="419"><DockText>外部参照</DockText></DockPane>
        </Dock>
      </Main>

      <Footer>
        <LayoutTabs>
          <LayoutTab $w={44} $mr={-1}>{N('モデル', -1.5)}</LayoutTab>
          <LayoutTab $w={114} $mr={1} $active>{N('D サイズ レイアウト', -1.6)}</LayoutTab>
          <LayoutTab $w={24}><Ic w={10} h={10} sw={2}><path d="M5 0V10M0 5H10" /></Ic></LayoutTab>
        </LayoutTabs>
        <StatusBar>
          <StatusGroup><StatusCell $w={34}>{N('モデル', -1)}</StatusCell></StatusGroup>
          <StatusGroup>
            <StatusCell $w={23}><SGrid /></StatusCell><StatusCell $w={25}><SDots /></StatusCell><StatusCell $w={14}><Caret /></StatusCell>
          </StatusGroup>
          <StatusGroup>
            <StatusCell $w={26}><SOrtho /></StatusCell>
            <StatusCell $w={22} $on><SPolar /></StatusCell>
            <StatusCell $w={16}><Caret /></StatusCell>
            <StatusCell $w={22}><SIso /></StatusCell>
            <StatusCell $w={18}><Caret /></StatusCell>
            <StatusCell $w={22} $on><SAngle /></StatusCell>
            <StatusCell $w={22} $on $ml={2}><SSnap /></StatusCell>
            <StatusCell $w={16}><Caret /></StatusCell>
            <StatusCell $w={22} $on $ml={2}><SClip /></StatusCell>
          </StatusGroup>
          <StatusGroup>
            <StatusCell $w={24}><SFrame /></StatusCell>
            <StatusCell $w={24}><SFig extra={<circle cx="15" cy="4" r="2.500" />} /></StatusCell>
            <StatusCell $w={23}><SFig extra={<path d="M15 1 13 5H17L15 9" />} /></StatusCell>
            <StatusCell $w={24}><SLock /></StatusCell>
            <StatusCell $w={25}><SDim /></StatusCell>
            <StatusCell $w={69} $dim>1/4" = 1'-0"</StatusCell>
            <StatusCell $w={12}><Caret $c="#99a0ab" /></StatusCell>
            <StatusCell $w={23} $on><SAnno /></StatusCell>
            <StatusCell $w={3} />
          </StatusGroup>
          <StatusGroup>
            <StatusCell $w={22}><SGear /></StatusCell><StatusCell $w={18}><Caret /></StatusCell>
          </StatusGroup>
          <StatusGroup><StatusCell $w={22}><SPlus /></StatusCell></StatusGroup>
          <StatusGroup><StatusCell $w={26}><SIsolate /></StatusCell></StatusGroup>
          <StatusGroup>
            <StatusCell $w={25}><SFull /></StatusCell><StatusCell $w={25}><SMenu /></StatusCell>
          </StatusGroup>
        </StatusBar>
      </Footer>
    </Page>
  );
}
